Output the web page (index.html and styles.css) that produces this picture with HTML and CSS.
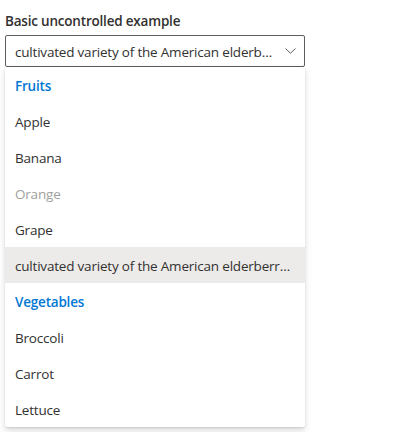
FILE: index.html
```html
<!DOCTYPE html>
<html>
<head>
<meta charset="utf-8">
<link rel="stylesheet" href="styles.css">
</head>
<body>
<div class="wrap">
  <label class="label">Basic uncontrolled example</label>
  <div class="dropdown">
    <span class="title">cultivated variety of the American elderberry, Sambucus nigra</span>
    <svg class="chev" width="11" height="6" viewBox="0 0 11 6"><path d="M0.5 0.5 L5.5 5.2 L10.5 0.5" fill="none" stroke="#605e5c" stroke-width="1"/></svg>
  </div>
  <div class="menu">
    <div class="item header">Fruits</div>
    <div class="item">Apple</div>
    <div class="item">Banana</div>
    <div class="item disabled">Orange</div>
    <div class="item">Grape</div>
    <div class="item selected">cultivated variety of the American elderberry, Sambucus nigra</div>
    <div class="item header">Vegetables</div>
    <div class="item">Broccoli</div>
    <div class="item">Carrot</div>
    <div class="item">Lettuce</div>
  </div>
</div>
</body>
</html>
```
FILE: styles.css
```css
html, body { margin: 0; padding: 0; background: #fff; }
body {
  font-family: "Segoe UI", "Open Sans", "Noto Sans", sans-serif;
  font-size: 13.5px;
  letter-spacing: -0.2px;
  color: #323130;
}
.wrap { padding: 5px; width: 300px; }
.label {
  display: block;
  font-weight: 600;
  line-height: 20px;
  padding: 6px 0 4px;
  color: #323130;
}
.dropdown {
  box-sizing: border-box;
  height: 32px;
  border: 1px solid #605e5c;
  border-radius: 2px;
  display: flex;
  align-items: center;
  padding: 0 8px 0 9px;
}
.title {
  flex: 1;
  min-width: 0;
  white-space: nowrap;
  overflow: hidden;
  text-overflow: ellipsis;
  line-height: 28px;
  padding-top: 2px;
  padding-right: 10px;
}
.chev { flex: none; }
.menu {
  background: #fff;
  border-radius: 2px;
  box-shadow: 0 3.2px 7.2px rgba(0,0,0,.132), 0 0.6px 1.8px rgba(0,0,0,.108);
}
.item {
  height: 36px;
  box-sizing: border-box;
  line-height: 34px;
  padding: 2px 10px 0 10px;
  white-space: nowrap;
  overflow: hidden;
  text-overflow: ellipsis;
}
.header { color: #0078d4; font-weight: 600; }
.disabled { color: #a19f9d; }
.selected { background: #edebe9; }
```
